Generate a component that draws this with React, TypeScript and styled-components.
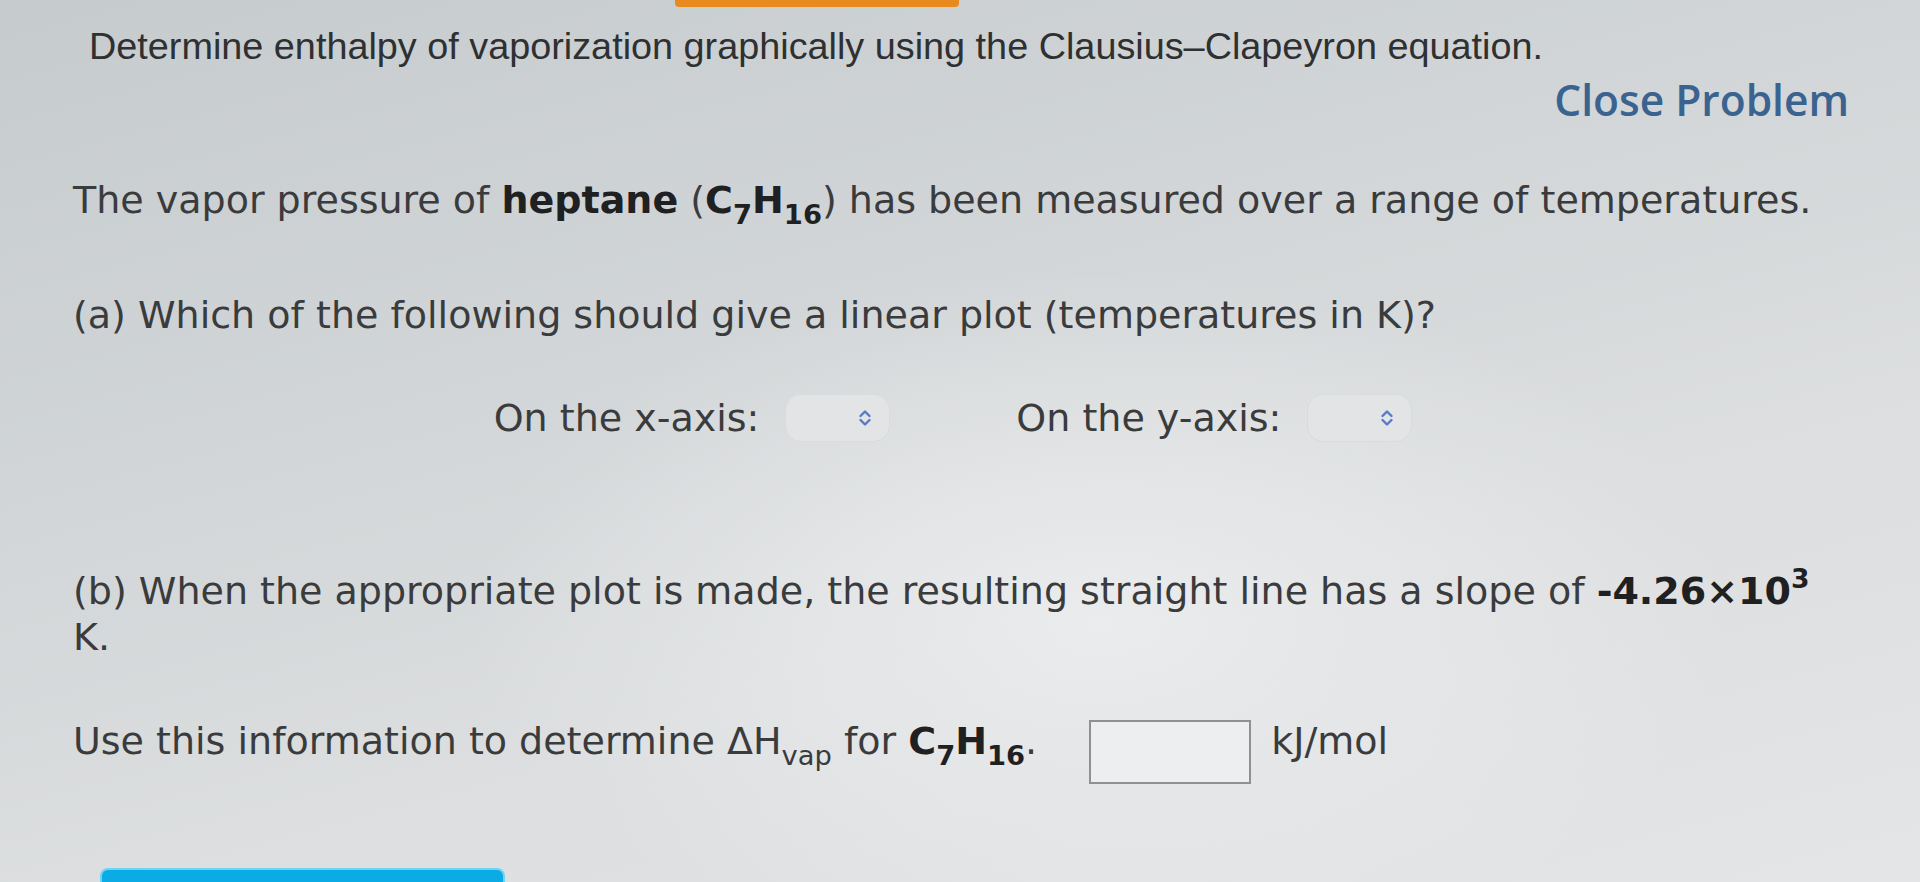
import React from "react";
import styled, { createGlobalStyle } from "styled-components";

const Global = createGlobalStyle`
  html, body { margin: 0; padding: 0; }
  body {
    width: 1920px;
    height: 882px;
    overflow: hidden;
    background: #d6d9db;
  }
`;

const Page = styled.div`
  position: relative;
  width: 1920px;
  height: 882px;
  overflow: hidden;
  background:
    radial-gradient(ellipse 900px 500px at 1100px 620px, rgba(236, 237, 238, 0.9), rgba(236, 237, 238, 0) 70%),
    linear-gradient(165deg, #c6cbce 0%, #d1d5d7 35%, #dcdedf 65%, #e4e5e6 100%);
  font-family: "DejaVu Sans", Verdana, sans-serif;
  color: #3a3b3c;
  display: flex;
  flex-direction: column;
`;

const TopTab = styled.div`
  position: absolute;
  left: 675px;
  top: 0;
  width: 284px;
  height: 7px;
  background: #e98a1e;
  border-radius: 0 0 4px 4px;
`;

const Header = styled.header`
  display: flex;
  flex-direction: column;
  padding: 22px 71px 0 89px;
`;

const Title = styled.h1`
  margin: 0;
  font-family: "Liberation Sans", Arial, sans-serif;
  font-weight: 400;
  font-size: 37.8px;
  line-height: 48px;
  color: #2f3031;
`;

const CloseLink = styled.a`
  align-self: flex-end;
  margin-top: 5px;
  font-family: "Open Sans", sans-serif;
  font-weight: 600;
  font-size: 42.5px;
  line-height: 50px;
  color: #3a6390;
  text-decoration: none;
`;

const Body = styled.main`
  padding: 0 0 0 73px;
  display: flex;
  flex-direction: column;
  font-size: 38px;
`;

const Para = styled.p<{ $mt: number }>`
  margin: ${(p) => p.$mt}px 0 0 0;
  line-height: 46px;
  width: 1760px;
`;

const Strong = styled.b`
  font-weight: 700;
  color: #1f2021;
`;

const Sub = styled.sub`
  font-size: 0.72em;
  vertical-align: -0.42em;
  line-height: 0;
`;

const Sup = styled.sup`
  font-size: 0.7em;
  vertical-align: 0.62em;
  line-height: 0;
`;

const AxisRow = styled.div`
  display: flex;
  justify-content: center;
  align-items: center;
  gap: 126px;
  margin-top: 56px;
  padding-right: 87px;
`;

const AxisField = styled.label`
  display: flex;
  align-items: center;
  gap: 26px;
  line-height: 46px;
`;

const SelectBox = styled.div`
  width: 105px;
  height: 48px;
  border-radius: 16px;
  background: #e2e4e6;
  border: 1px solid #d9dcde;
  box-sizing: border-box;
  display: flex;
  align-items: center;
  justify-content: flex-end;
  padding-right: 17px;
`;

const AnswerRow = styled.div`
  display: flex;
  align-items: flex-start;
  margin-top: 58px;
  line-height: 46px;
`;

const AnswerInput = styled.div`
  width: 162px;
  height: 64px;
  margin: 2px 20px 0 52px;
  box-sizing: border-box;
  border: 2px solid #8e9093;
  background: #eceeef;
`;

const Unit = styled.span`
  color: #3a3b3c;
`;

const BlueButton = styled.div`
  position: absolute;
  left: 100px;
  top: 868px;
  width: 405px;
  height: 30px;
  background: #0babe5;
  border: 2px solid #6fd3f5;
  border-radius: 8px;
  box-sizing: border-box;
`;

const Chevron = () => (
  <svg width="14" height="20" viewBox="0 0 14 20" fill="none">
    <path d="M2.5 8 L7 3.5 L11.5 8" stroke="#5a78c8" strokeWidth="2.4" strokeLinecap="round" strokeLinejoin="round" />
    <path d="M2.5 12 L7 16.5 L11.5 12" stroke="#5a78c8" strokeWidth="2.4" strokeLinecap="round" strokeLinejoin="round" />
  </svg>
);

const Formula = () => (
  <Strong>
    C<Sub>7</Sub>H<Sub>16</Sub>
  </Strong>
);

export default function App() {
  return (
    <Page>
      <Global />
      <TopTab />
      <Header>
        <Title>Determine enthalpy of vaporization graphically using the Clausius–Clapeyron equation.</Title>
        <CloseLink href="#">Close Problem</CloseLink>
      </Header>
      <Body>
        <Para $mt={52}>
          The vapor pressure of <Strong>heptane</Strong> (<Formula />) has been measured over a range of temperatures.
        </Para>
        <Para $mt={69}>(a) Which of the following should give a linear plot (temperatures in K)?</Para>
        <AxisRow>
          <AxisField>
            On the x-axis:
            <SelectBox>
              <Chevron />
            </SelectBox>
          </AxisField>
          <AxisField>
            On the y-axis:
            <SelectBox>
              <Chevron />
            </SelectBox>
          </AxisField>
        </AxisRow>
        <Para $mt={126}>
          (b) When the appropriate plot is made, the resulting straight line has a slope of{" "}
          <Strong>
            -4.26×10<Sup>3</Sup>
          </Strong>{" "}
          K.
        </Para>
        <AnswerRow>
          <span>
            Use this information to determine ΔH<Sub>vap</Sub> for <Formula />.
          </span>
          <AnswerInput />
          <Unit>kJ/mol</Unit>
        </AnswerRow>
      </Body>
      <BlueButton />
    </Page>
  );
}
